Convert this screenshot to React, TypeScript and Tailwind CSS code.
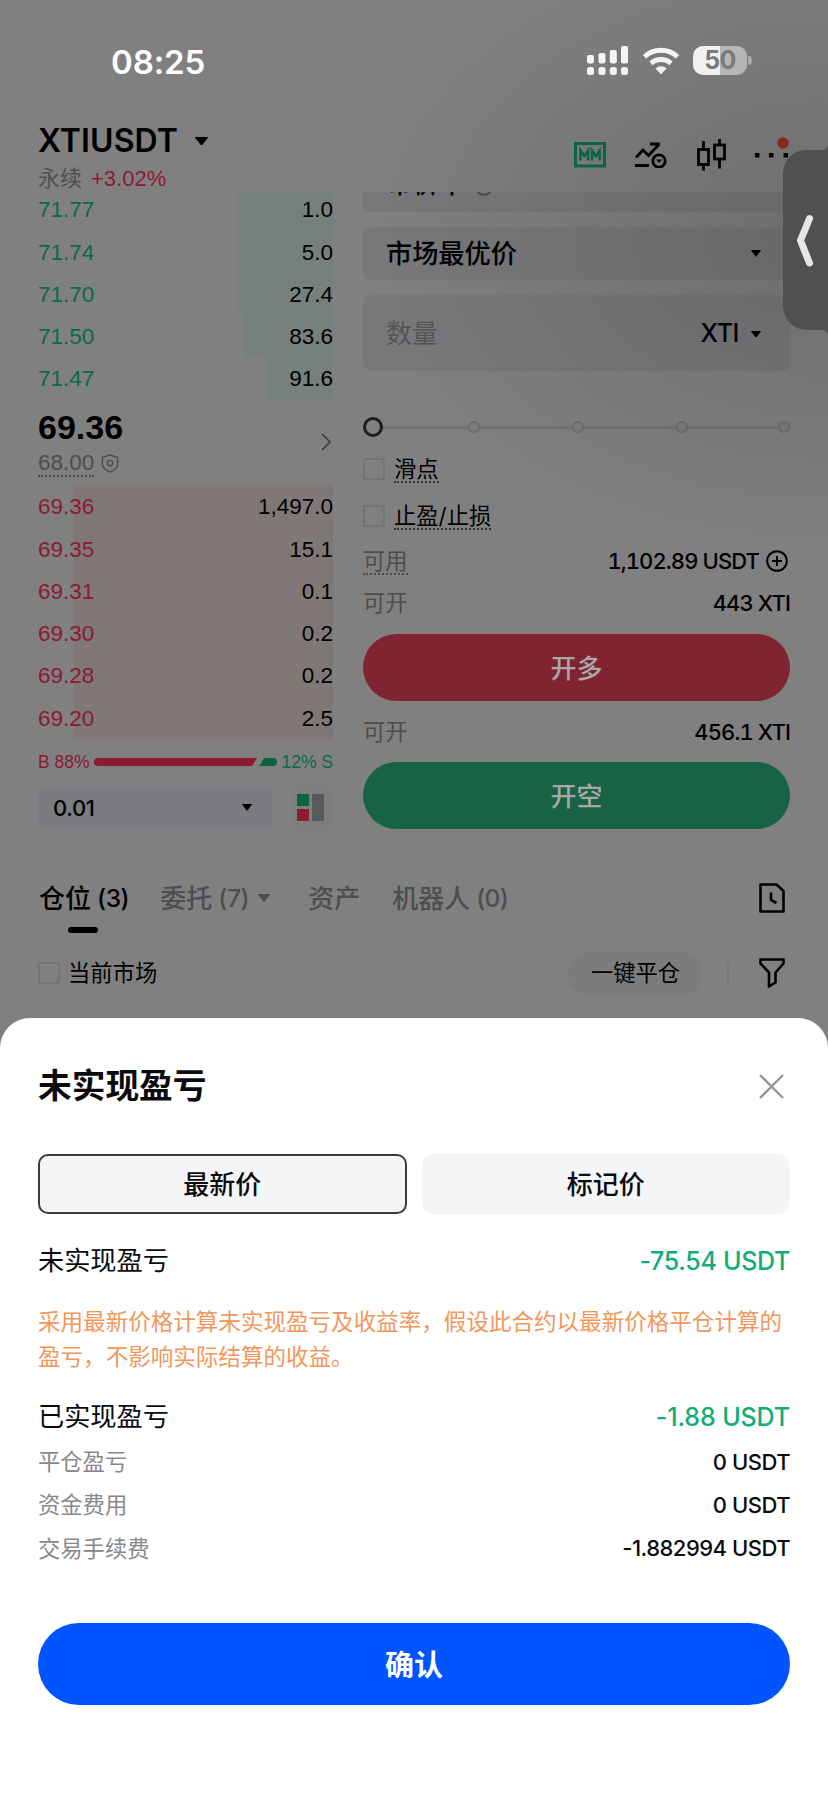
import React from 'react';
import type { ReactNode } from 'react';
import clsx from 'clsx';

interface BookRow {
  price: string;
  size: string;
  depth: number;
}

const asks: BookRow[] = [
  { price: '71.77', size: '1.0', depth: 96 },
  { price: '71.74', size: '5.0', depth: 96 },
  { price: '71.70', size: '27.4', depth: 96 },
  { price: '71.50', size: '83.6', depth: 89 },
  { price: '71.47', size: '91.6', depth: 65 },
];

const bids: BookRow[] = [
  { price: '69.36', size: '1,497.0', depth: 259 },
  { price: '69.35', size: '15.1', depth: 259 },
  { price: '69.31', size: '0.1', depth: 259 },
  { price: '69.30', size: '0.2', depth: 259 },
  { price: '69.28', size: '0.2', depth: 259 },
  { price: '69.20', size: '2.5', depth: 259 },
];

const fees = [
  { label: '平仓盈亏', value: '0 USDT' },
  { label: '资金费用', value: '0 USDT' },
  { label: '交易手续费', value: '-1.882994 USDT' },
];

const Caret = ({ className = 'w-[10px]' }: { className?: string }) => (
  <svg viewBox="0 0 12 8" className={className} fill="currentColor">
    <path d="M0.4 0h11.2c.4 0 .5.4.3.700L6.400 7.700a.5.5 0 0 1-.8 0L.1.700C-.1.400 0 0 .4 0z" />
  </svg>
);

const CheckBox = () => (
  <span className="h-[22px] w-[22px] shrink-0 rounded-[2px] border-2 border-[#747474]" />
);

const StatusBar = () => (
  <div className="flex h-[120px] items-start justify-between pl-[111px] pr-[76px]">
    <span className="mt-[42px] text-[33px] leading-[40px] font-semibold tracking-[-0.1px] text-white">08:25</span>
    <div className="mt-[46px] flex items-center">
      <svg viewBox="0 0 42 29" className="h-[29px] w-[42px]" fill="#fff">
        <rect x="0" y="9" width="7" height="8.500" rx="2" />
        <rect x="11.500" y="7" width="7" height="10.500" rx="2" />
        <rect x="22.800" y="4" width="7" height="13.500" rx="2" />
        <rect x="34" y="0" width="7" height="17.500" rx="2" />
        <rect x="0" y="21" width="7" height="8" rx="2.500" />
        <rect x="11.500" y="21" width="7" height="8" rx="2.500" />
        <rect x="22.800" y="21" width="7" height="8" rx="2.500" />
        <rect x="34" y="21" width="7" height="8" rx="2.500" />
      </svg>
      <svg viewBox="0 0 38 28" className="ml-[13px] h-[28px] w-[38px]" fill="none" stroke="#fff">
        <path d="M2.500 9.800a24 24 0 0 1 33 0" strokeWidth="5" />
        <path d="M9 16.400a15 15 0 0 1 20 0" strokeWidth="5" />
        <path d="M19 27.200l-5.600-5.800a8.400 8.400 0 0 1 11.200 0z" fill="#fff" stroke="none" />
      </svg>
      <div className="ml-[13px] flex h-[29px] w-[54px] items-center justify-center rounded-[10px] bg-[linear-gradient(90deg,#fff_50%,#c1c1c1_50%)]">
        <span className="text-[25px] leading-[29px] font-bold tracking-[-0.6px] text-[#808080]">50</span>
      </div>
      <span className="ml-[1px] h-[9px] w-[4px] rounded-r-full bg-[#b8b8b8]" />
    </div>
  </div>
);

const Header = () => (
  <div className="flex h-[72px] items-start justify-between pl-[38px] pr-[38px]">
    <div>
      <div className="flex h-[42px] items-center">
        <span className="text-[32px] leading-[42px] font-semibold tracking-[0.1px]">XTIUSDT</span>
        <Caret className="ml-[17px] w-[13px]" />
      </div>
      <div className="flex h-[32px] items-center gap-[9px] text-[22px]">
        <span className="text-[#505052]">永续</span>
        <span className="font-['Liberation_Sans',sans-serif] text-[#8c1a34]">+3.02%</span>
      </div>
    </div>
    <div className="relative mt-[19px] flex h-[32px] items-center">
      <svg viewBox="0 0 32 26" className="h-[26px] w-[32px]" fill="none" stroke="#0b6a46">
        <rect x="1.500" y="1.500" width="29" height="22.500" strokeWidth="3" />
        <path d="M6.500 18.500V8.500l3.800 5.500 3.800-5.500v10M18 18.500V8.500l3.800 5.500 3.800-5.500v10" strokeWidth="2.500" />
      </svg>
      <svg viewBox="0 0 32 26" className="ml-[29px] h-[26px] w-[32px]" fill="none" stroke="#000" strokeWidth="2.800">
        <path d="M1 15.500l7-7.500 5.500 5.500L24 2.500M15 2h9.800M0 23.500h14" />
        <circle cx="24" cy="19" r="6.200" />
        <path d="M21 17.500h6l-3 3.600z" fill="#000" stroke="none" />
      </svg>
      <svg viewBox="0 0 30 32" className="ml-[29px] h-[32px] w-[30px]" fill="none" stroke="#000" strokeWidth="2.800">
        <path d="M7.500 2v8M7.500 25.500v6M23.500 0v6.500M23.500 20.500V29.500" />
        <rect x="2.500" y="10.500" width="10" height="15" />
        <rect x="18.500" y="6" width="10" height="14" />
      </svg>
      <svg viewBox="0 0 36 32" className="ml-[28px] h-[32px] w-[36px] overflow-visible">
        <rect x="1" y="14" width="4.500" height="4.500" />
        <rect x="15" y="14" width="4.500" height="4.500" />
        <rect x="29.500" y="14" width="4.500" height="4.500" />
        <circle cx="29" cy="4" r="5.700" fill="#95301f" />
      </svg>
    </div>
  </div>
);

const BookSide = ({ rows, side }: { rows: BookRow[]; side: 'ask' | 'bid' }) => (
  <div>
    {rows.map((row) => (
      <div key={row.price} className="relative flex h-[42.3px] items-center justify-between pt-[2px] font-['Liberation_Sans',sans-serif] text-[22.500px]">
        <span
          className={clsx('absolute inset-y-0 right-0', side === 'ask' ? 'bg-[#76807c]' : 'bg-[#807777]')}
          style={{ width: row.depth }}
        />
        <span className={clsx('relative', side === 'ask' ? 'text-[#0b6a48]' : 'text-[#8c1a34]')}>{row.price}</span>
        <span className="relative">{row.size}</span>
      </div>
    ))}
  </div>
);

const OrderBook = () => (
  <div className="-mt-[4px] w-[295px]">
    <BookSide rows={asks} side="ask" />
    <div className="flex h-[85.500px] items-center justify-between">
      <div>
        <div className="font-['Liberation_Sans',sans-serif] text-[34px] leading-[40px] font-bold">69.36</div>
        <div className="flex items-center gap-[7px] pt-[3px] text-[#4d4d4f]">
          <span className="border-b-2 border-dotted border-[#4d4d4f] font-['Liberation_Sans',sans-serif] text-[22.500px] leading-[25px]">68.00</span>
          <svg viewBox="0 0 18 20" className="h-[19px] w-[18px]" fill="none" stroke="currentColor" strokeWidth="1.500">
            <path d="M9 1L17 3.500v7c0 4-4 6.800-8 8.500-4-1.700-8-4.500-8-8.500v-7z" />
            <circle cx="9" cy="9.500" r="2.800" />
          </svg>
        </div>
      </div>
      <svg viewBox="0 0 10 18" className="mr-[2px] h-[18px] w-[10px]" fill="none" stroke="#3c3c3c" strokeWidth="1.600">
        <path d="M1 1l8 8-8 8" />
      </svg>
    </div>
    <BookSide rows={bids} side="bid" />
    <div className="flex h-[47px] items-center font-['Liberation_Sans',sans-serif] text-[17.500px] leading-none">
      <span className="w-[56px] pt-px whitespace-nowrap text-[#8c1a34]">B 88%</span>
      <svg viewBox="0 0 183 8" className="h-[8px] w-[183px]">
        <path d="M4 0H163L158 8H4a4 4 0 0 1 0-8z" fill="#8c1a30" />
        <path d="M170 0h9a4 4 0 0 1 0 8h-13.500z" fill="#08653f" />
      </svg>
      <span className="flex-1 pt-px text-right whitespace-nowrap text-[#0b6a48]">12% S</span>
    </div>
    <div className="flex h-[44px] justify-between">
      <div className="flex w-[235px] items-center justify-between rounded-[6px] bg-[#7b7c7f] pl-[15px] pr-[21px]">
        <span className="pt-px text-[22px] font-medium tracking-[-0.4px]">0.01</span>
        <Caret />
      </div>
      <div className="flex w-[41px] items-center justify-center rounded-[6px] bg-[#7e7e80] pr-[5px]">
        <svg viewBox="0 0 27 27" className="h-[27px] w-[27px]">
          <rect width="12" height="12" fill="#08653f" />
          <rect y="15" width="12" height="12" fill="#8c1a30" />
          <rect x="15" width="12" height="27" fill="#565a5c" />
        </svg>
      </div>
    </div>
  </div>
);

const InfoRow = ({ label, children }: { label: ReactNode; children: ReactNode }) => (
  <div className="flex h-[42px] items-center justify-between pt-[2px] text-[22.300px]">
    <span className="text-[#4d4d4f]">{label}</span>
    <span className="flex items-center gap-[7px] text-[22px] font-medium tracking-[-0.9px] tabular-nums">{children}</span>
  </div>
);

const stops = ['left-[105px]', 'left-[209px]', 'left-[313px]', 'left-[415px]'];

const OrderForm = () => (
  <div className="w-[427px]">
    <div className="flex h-[20px] items-end gap-[11px] overflow-hidden rounded-b-[8px] bg-[#79797c] pb-[13px] pl-[24px]">
      <span className="text-[26px] leading-[31px] font-medium">市价单</span>
      <span className="mb-[3px] h-[16px] w-[16px] rounded-full border-2 border-[#4d4d4f]" />
    </div>
    <div className="mt-[15px] flex h-[53px] items-center justify-between rounded-[8px] bg-[#79797c] pl-[23px] pr-[29px]">
      <span className="pt-px text-[26.200px] font-medium">市场最优价</span>
      <Caret />
    </div>
    <div className="mt-[15px] flex h-[76px] items-center justify-between rounded-[8px] bg-[#79797c] pl-[23px] pr-[29px]">
      <span className="text-[26px] text-[#555557]">数量</span>
      <span className="flex items-center gap-[12px] pt-[2px] text-[25px] font-medium tracking-[-0.4px]">
        XTI
        <Caret />
      </span>
    </div>
    <div className="relative mt-[46px] h-[20px]">
      <span className="absolute top-[9px] right-[6px] left-[10px] h-[3px] bg-[#737373]" />
      {stops.map((stop) => (
        <span key={stop} className={clsx('absolute top-[4px] h-[12px] w-[12px] rounded-full border-2 border-[#6e6e6e] bg-[#7d7d7d]', stop)} />
      ))}
      <span className="absolute top-0 left-0 h-[20px] w-[20px] rounded-full border-[3px] border-[#1c1c1c] bg-[#808080]" />
    </div>
    <div className="mt-[8px] flex h-[47px] items-center gap-[9px] text-[22.300px]">
      <CheckBox />
      <span className="mt-[2px] border-b-2 border-dotted border-[#333] leading-[25px]">滑点</span>
    </div>
    <div className="flex h-[47px] items-center gap-[9px] text-[22.300px]">
      <CheckBox />
      <span className="mt-[2px] border-b-2 border-dotted border-[#333] leading-[25px]">止盈/止损</span>
    </div>
    <InfoRow label={<span className="inline-block border-b-2 border-dotted border-[#4d4d4f] leading-[25px]">可用</span>}>
      1,102.89 USDT
      <svg viewBox="0 0 22 22" className="mr-[2px] h-[22px] w-[22px]" fill="none" stroke="#000" strokeWidth="2">
        <circle cx="11" cy="11" r="9.800" />
        <path d="M11 6v10M6 11h10" />
      </svg>
    </InfoRow>
    <InfoRow label="可开">443 XTI</InfoRow>
    <div className="mt-[11px] flex h-[67px] items-center justify-center rounded-full bg-[#7f2430] pt-[2px] text-[26px] font-medium text-[#a8a8a8]">开多</div>
    <div className="mt-[9px]">
      <InfoRow label="可开">456.1 XTI</InfoRow>
    </div>
    <div className="mt-[10px] flex h-[67px] items-center justify-center rounded-full bg-[#176344] pt-[2px] text-[26px] font-medium text-[#a8a8a8]">开空</div>
  </div>
);

const PositionTabs = () => (
  <div className="mt-[37px]">
    <div className="flex h-[66px] items-center border-b border-[#7d7d7d] pr-[38px] pb-[1px] pl-[39px] text-[26px] font-medium text-[#4e4e50]">
      <div className="relative flex h-[65px] items-center gap-[6px] text-black">
        仓位 <span className="text-[24.500px] tracking-[-0.4px]">(3)</span>
        <span className="absolute -bottom-[2px] left-[29px] h-[6px] w-[30px] rounded-full bg-black" />
      </div>
      <div className="ml-[31px] flex items-center gap-[6px]">
        委托 <span className="text-[24.500px] tracking-[-0.4px]">(7)</span>
        <Caret className="ml-[3px] w-[12px]" />
      </div>
      <span className="ml-[38px]">资产</span>
      <div className="ml-[32px] flex items-center gap-[6px]">
        机器人 <span className="text-[24.500px] tracking-[-0.6px]">(0)</span>
      </div>
      <svg viewBox="0 0 26 30" className="mr-[5px] ml-auto h-[30px] w-[26px]" fill="none" stroke="#000" strokeWidth="2.600">
        <path d="M1.500 1.500H17.500L24.500 8v20.500h-23z" strokeLinejoin="round" />
        <path d="M12 9.500V17l5.500 3" />
      </svg>
    </div>
    <div className="flex h-[82px] items-center px-[38px] text-[22.300px]">
      <CheckBox />
      <span className="ml-[8px]">当前市场</span>
      <span className="ml-auto flex h-[45px] w-[135px] items-center justify-center rounded-full bg-[#7c7c7c]">一键平仓</span>
      <span className="ml-[24px] h-[21px] w-[2px] bg-[#787878]" />
      <svg viewBox="0 0 26 30" className="mr-[5px] ml-[30px] h-[30px] w-[26px]" fill="none" stroke="#000" strokeWidth="2.600" strokeLinejoin="round">
        <path d="M1.500 1.500h23v4L16.500 14.500v10l-6.500 4V14.500L1.500 5.500z" />
      </svg>
    </div>
  </div>
);

const PnlSheet = () => (
  <div className="h-[782px] rounded-t-[30px] bg-white px-[38px] pt-[45px] text-[#0b0b0e]">
    <div className="flex h-[46px] items-center justify-between">
      <h2 className="pt-px text-[33.700px] font-bold">未实现盈亏</h2>
      <svg viewBox="0 0 26 26" className="mr-[6px] h-[25px] w-[25px]" fill="none" stroke="#969696" strokeWidth="2.400">
        <path d="M1 1l24 24M25 1L1 25" />
      </svg>
    </div>
    <div className="mt-[45px] grid grid-cols-2 gap-[15px] text-[26px] font-medium">
      <button className="h-[60px] rounded-[10px] border-2 border-[#3a3a3f] bg-[#f4f5f7]">最新价</button>
      <button className="h-[60px] rounded-[10px] bg-[#f4f5f7]">标记价</button>
    </div>
    <div className="mt-[25px] flex h-[44px] items-center justify-between text-[26.200px]">
      <span>未实现盈亏</span>
      <span className="pt-[2px] text-[25px] font-medium tracking-[-0.3px] text-[#11ac79]">-75.54 USDT</span>
    </div>
    <p className="mt-[21px] text-[22.550px] leading-[35px] whitespace-nowrap text-[#f1975b]">
      采用最新价格计算未实现盈亏及收益率，假设此合约以最新价格平仓计算的
      <br />
      盈亏，不影响实际结算的收益。
    </p>
    <div className="mt-[21px] flex h-[44px] items-center justify-between text-[26.200px]">
      <span>已实现盈亏</span>
      <span className="pt-[2px] text-[25px] font-medium tracking-[-0.1px] text-[#11ac79]">-1.88 USDT</span>
    </div>
    {fees.map((fee) => (
      <div key={fee.label} className="flex h-[43.300px] items-center justify-between pt-[2px] text-[22.300px]">
        <span className="text-[#88888c]">{fee.label}</span>
        <span className="pt-px text-[22px] font-medium tracking-[-0.5px]">{fee.value}</span>
      </div>
    ))}
    <button className="mt-[54px] h-[82px] w-full rounded-full bg-[#0055ff] pt-[3px] text-[29px] font-bold text-white">确认</button>
  </div>
);

// collapsed floating panel docked to the right edge of the screen
const SideHandle = () => (
  <svg viewBox="0 0 46 190" className="absolute top-[145px] right-0 h-[190px] w-[46px]">
    <path d="M46 0c-1 4-3 5-8 5h-12C10 5 1 15 1 32v125c0 17 9 28 25 28h12c5 0 7 1 8 5z" fill="#505050" />
    <path d="M27.500 73.500L18.500 95.500l9 22.500" fill="none" stroke="#e6e6ea" strokeWidth="7" strokeLinecap="round" strokeLinejoin="round" />
  </svg>
);

const App: React.FC = () => (
  <div className="relative h-[1800px] w-[828px] overflow-hidden bg-[#808080] font-['Inter','Noto_Sans_CJK_SC',sans-serif] text-black">
    <StatusBar />
    <Header />
    <div className="h-[826px] overflow-hidden">
      <div className="flex h-[637px] justify-between px-[38px]">
        <OrderBook />
        <OrderForm />
      </div>
      <PositionTabs />
    </div>
    <PnlSheet />
    <div className="pointer-events-none absolute top-0 right-0 h-[600px] w-[500px] bg-[radial-gradient(ellipse_480px_320px_at_100%_240px,rgba(0,0,0,0.15),rgba(0,0,0,0))]" />
    <SideHandle />
  </div>
);

export default App;
